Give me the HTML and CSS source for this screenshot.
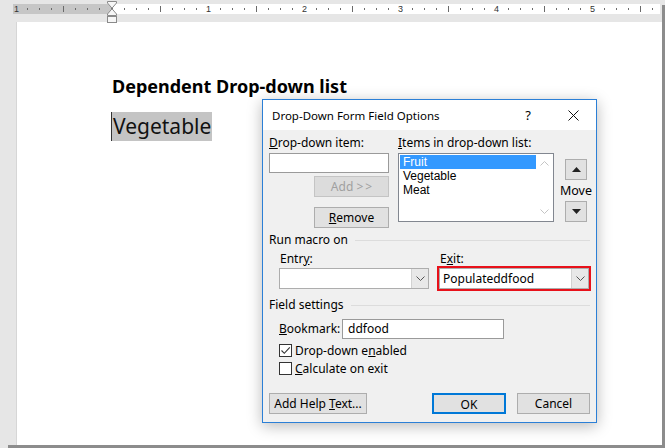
FILE: index.html
```html
<!DOCTYPE html>
<html lang="en">
<head>
    <meta charset="UTF-8">
    <title>Dependent Drop-down list</title>
    <link rel="stylesheet" href="styles.css">
</head>
<body>
    <div class="workspace">
        <div class="ruler">
            <div class="inch margin"><span class="num">1</span></div>
            <div class="inch">
                <svg class="indent" width="10" height="22" viewBox="0 0 10 22">
                    <path d="M.5 .5H9.5V2L5 7.2 .5 2Z" fill="#f6f6f6" stroke="#8a8a8a"/>
                    <path d="M5 7.8L9.5 13V14.5H.5V13Z" fill="#f6f6f6" stroke="#8a8a8a"/>
                    <rect x=".5" y="15.5" width="9" height="6" fill="#f6f6f6" stroke="#8a8a8a"/>
                </svg>
            </div>
            <div class="inch"><span class="num">1</span></div>
            <div class="inch"><span class="num">2</span></div>
            <div class="inch"><span class="num">3</span></div>
            <div class="inch"><span class="num">4</span></div>
            <div class="inch last"><span class="num">5</span></div>
        </div>

        <div class="paper">
            <h1 class="doc-title">Dependent Drop-down list</h1>
            <span class="field-value">Vegetable</span>
        </div>
        <div class="page-edge"></div>
    </div>
    <div class="scroll-edge"></div>

    <div class="dialog">
        <div class="titlebar">
            <span class="title">Drop-Down Form Field Options</span>
            <span class="help">?</span>
            <span class="close">
                <svg width="11" height="11" viewBox="0 0 11 11"><path d="M.5 .5l10 10M10.5 .5l-10 10" stroke="#111" stroke-width="1"/></svg>
            </span>
        </div>

        <div class="dlg-body">
            <div class="items-row">
                <div class="col-item">
                    <label><u>D</u>rop-down item:</label>
                    <div class="textbox"></div>
                    <button class="btn add" disabled>Add &gt;&#8201;&gt;</button>
                    <button class="btn remove"><u>R</u>emove</button>
                </div>

                <div class="col-list">
                    <label><u>I</u>tems in drop-down list:</label>
                    <div class="listbox">
                        <ul class="options">
                            <li class="selected">Fruit</li>
                            <li>Vegetable</li>
                            <li>Meat</li>
                        </ul>
                        <div class="vscroll">
                            <svg width="9" height="5" viewBox="0 0 9 5"><path d="M.5 4.5l4-4 4 4" fill="none" stroke="#c4c4c4"/></svg>
                            <svg width="9" height="5" viewBox="0 0 9 5"><path d="M.5 .5l4 4 4-4" fill="none" stroke="#c4c4c4"/></svg>
                        </div>
                    </div>
                </div>

                <div class="col-move">
                    <button class="btn arrow">
                        <svg width="9" height="5" viewBox="0 0 9 5"><path d="M4.5 0L9 5H0Z" fill="#222"/></svg>
                    </button>
                    <span class="move-label">Move</span>
                    <button class="btn arrow">
                        <svg width="9" height="5" viewBox="0 0 9 5"><path d="M0 0H9L4.5 5Z" fill="#222"/></svg>
                    </button>
                </div>
            </div>

            <div class="group-title"><span>Run macro on</span></div>

            <div class="macro-row">
                <div class="field">
                    <label>Entr<u>y</u>:</label>
                    <div class="combo">
                        <span class="combo-text"></span>
                        <span class="combo-drop">
                            <svg width="9" height="5" viewBox="0 0 9 5"><path d="M.5 .5l4 4 4-4" fill="none" stroke="#555"/></svg>
                        </span>
                    </div>
                </div>
                <div class="field">
                    <label>E<u>x</u>it:</label>
                    <div class="combo marked">
                        <span class="combo-text">Populateddfood</span>
                        <span class="combo-drop">
                            <svg width="9" height="5" viewBox="0 0 9 5"><path d="M.5 .5l4 4 4-4" fill="none" stroke="#555"/></svg>
                        </span>
                    </div>
                </div>
            </div>

            <div class="group-title settings"><span>Field settings</span></div>

            <div class="bookmark-row">
                <label><u>B</u>ookmark:</label>
                <div class="textbox bookmark">ddfood</div>
            </div>

            <div class="check-row first">
                <span class="checkbox">
                    <svg width="11" height="11" viewBox="0 0 11 11"><path d="M1.5 5.5l2.8 2.8 5.5-6" fill="none" stroke="#333" stroke-width="1.1"/></svg>
                </span>
                <span>Drop-down e<u>n</u>abled</span>
            </div>
            <div class="check-row">
                <span class="checkbox"></span>
                <span><u>C</u>alculate on exit</span>
            </div>

            <div class="footer-row">
                <button class="btn help-text">Add Help <u>T</u>ext...</button>
                <button class="btn ok">OK</button>
                <button class="btn cancel">Cancel</button>
            </div>
        </div>
    </div>
</body>
</html>
```

FILE: styles.css
```css
:root {
    --ui-font: "Noto Sans", "DejaVu Sans", sans-serif;
    --dlg-bg: #f0f0f0;
    --btn-bg: #e1e1e1;
    --btn-border: #adadad;
    --tick: #6a6a6a;
}

* {
    margin: 0;
    padding: 0;
    box-sizing: border-box;
}

body {
    width: 665px;
    height: 448px;
    overflow: hidden;
    display: flex;
    background: #e6e6e6;
    font-family: var(--ui-font);
    position: relative;
}

/* word window */

.workspace {
    flex: 1;
    display: flex;
    flex-direction: column;
}

.scroll-edge {
    width: 3px;
    margin-top: 5px;
    background: #8c8c8c;
}

.ruler {
    display: flex;
    height: 10px;
    width: 645px;
    margin: 4px 0 0 15px;
    font: 9px/10px "Liberation Sans", sans-serif;
    color: #333;
}

.inch {
    flex: none;
    width: 96px;
    display: flex;
    position: relative;
    background:
        linear-gradient(var(--tick), var(--tick)) 48px 2px / 1px 6px no-repeat,
        linear-gradient(to right, var(--tick) 1px, transparent 1px) 0 4px / 12px 2px repeat-x,
        #fff;
}

.inch.margin {
    width: 97px;
    background:
        linear-gradient(var(--tick), var(--tick)) 48px 2px / 1px 6px no-repeat,
        linear-gradient(to right, var(--tick) 1px, transparent 1px) 0 4px / 12px 2px repeat-x,
        #c6c6c6;
}

.inch.last {
    width: 68px;
}

.num {
    width: 7px;
    margin-left: -3px;
    text-align: center;
    background: #fff;
}

.margin .num {
    margin-left: -2px;
    background: #c6c6c6;
}

.indent {
    position: absolute;
    left: -5px;
    top: -3px;
}

.paper {
    flex: 1;
    margin: 8px 0 0 16px;
    background: #fff;
    border-left: 1px solid #d6d6d6;
    padding: 53px 0 0 95px;
}

.page-edge {
    height: 3px;
    margin-left: 8px;
    background: #8c8c8c;
}

.doc-title {
    font-size: 18px;
    line-height: 22px;
    font-weight: 700;
    color: #000;
}

.field-value {
    display: inline-block;
    margin: 15px 0 0 -1px;
    padding: 0 1px 0 1px;
    height: 29px;
    font-size: 21px;
    line-height: 29px;
    color: #111;
    background: #c4c4c4;
    border-left: 1px solid #333;
}

/* dialog */

.dialog {
    position: absolute;
    left: 262px;
    top: 99px;
    width: 335px;
    height: 324px;
    background: var(--dlg-bg);
    border: 1px solid #2b7fd6;
    box-shadow: 0 3px 14px rgba(0, 0, 0, 0.28);
    font-size: 12px;
    color: #000;
    display: flex;
    flex-direction: column;
}

.titlebar {
    height: 30px;
    background: #fff;
    display: flex;
    align-items: center;
    padding-left: 9px;
}

.title {
    flex: 1;
    font-size: 11.5px;
}

.help {
    width: 24px;
    margin-right: 10px;
    text-align: center;
    font-size: 13px;
}

.close {
    width: 46px;
    height: 30px;
    display: flex;
    align-items: center;
    justify-content: center;
}

.dlg-body {
    flex: 1;
    padding: 6px 6px 0 6px;
}

label {
    display: block;
    line-height: 14px;
}

.btn {
    display: block;
    font-family: var(--ui-font);
    font-size: 12px;
    line-height: 19px;
    text-align: center;
    color: #000;
    background: var(--btn-bg);
    border: 1px solid var(--btn-border);
    height: 21px;
}

.btn:disabled {
    color: #a0a0a0;
    background: #dcdcdc;
    border-color: #c4c4c4;
}

.textbox {
    height: 20px;
    background: #fff;
    border: 1px solid #9a9a9a;
    padding: 0 5px;
    line-height: 18px;
}

.items-row {
    display: flex;
    height: 92px;
}

.col-item {
    width: 120px;
    display: flex;
    flex-direction: column;
    align-items: flex-end;
}

.col-item label {
    align-self: stretch;
}

.col-item .textbox {
    width: 120px;
    margin-top: 3px;
}

.add,
.remove {
    width: 75px;
}

.add {
    margin-top: 3px;
}

.remove {
    margin-top: 10px;
}

.col-list {
    width: 156px;
    margin-left: 9px;
}

.listbox {
    margin-top: 3px;
    height: 69px;
    background: #fff;
    border: 1px solid #828790;
    display: flex;
    padding: 1px 0 1px 1px;
}

.options {
    flex: 1;
    list-style: none;
}

.options li {
    height: 14px;
    line-height: 14px;
    font-family: "Liberation Sans", sans-serif;
    font-size: 12px;
    padding-left: 3px;
}

.options .selected {
    background: #3399ff;
    color: #fff;
}

.vscroll {
    width: 17px;
    display: flex;
    flex-direction: column;
    justify-content: space-between;
    align-items: center;
    padding: 6px 0 6px;
}

.col-move {
    width: 22px;
    margin-left: 11px;
    padding-top: 23px;
    display: flex;
    flex-direction: column;
    align-items: center;
}

.arrow {
    width: 22px;
    height: 21px;
}

.arrow svg {
    display: block;
    margin: 0 auto;
}

.move-label {
    line-height: 20px;
    margin-top: 1px;
    font-size: 12.5px;
}

.group-title {
    display: flex;
    align-items: center;
    line-height: 14px;
    margin-top: 5px;
}

.group-title::after {
    content: "";
    flex: 1;
    height: 1px;
    margin-left: 7px;
    background: #dcdcdc;
}

.group-title.settings {
    margin-top: 9px;
}

.macro-row {
    display: flex;
    gap: 10px;
    padding-left: 10px;
    margin-top: 5px;
}

.field {
    width: 150px;
}

.field label {
    padding-left: 1px;
}

.combo {
    margin-top: 2px;
    height: 21px;
    display: flex;
    background: #fff;
    border: 1px solid var(--btn-border);
}

.combo.marked {
    outline: 2px solid #e8111a;
    outline-offset: 0;
}

.combo-text {
    flex: 1;
    padding-left: 3px;
    line-height: 19px;
}

.combo-drop {
    width: 17px;
    background: #e8e8e8;
    border-left: 1px solid #d2d2d2;
    display: flex;
    align-items: center;
    justify-content: center;
}

.bookmark-row {
    display: flex;
    align-items: center;
    padding-left: 10px;
    margin-top: 7px;
}

.bookmark-row label {
    width: 63px;
}

.textbox.bookmark {
    width: 162px;
    height: 20px;
}

.check-row {
    display: flex;
    align-items: center;
    gap: 3px;
    height: 16px;
    padding-left: 10px;
    margin-top: 2px;
}

.check-row.first {
    margin-top: 3px;
}

.checkbox {
    width: 13px;
    height: 13px;
    background: #fff;
    border: 1px solid #333;
    display: flex;
    align-items: center;
    justify-content: center;
}

.footer-row {
    display: flex;
    margin-top: 17px;
}

.help-text {
    width: 98px;
}

.ok {
    width: 74px;
    margin-left: auto;
    border: 2px solid #0078d7;
}

.cancel {
    width: 73px;
    margin-left: 11px;
}
```
